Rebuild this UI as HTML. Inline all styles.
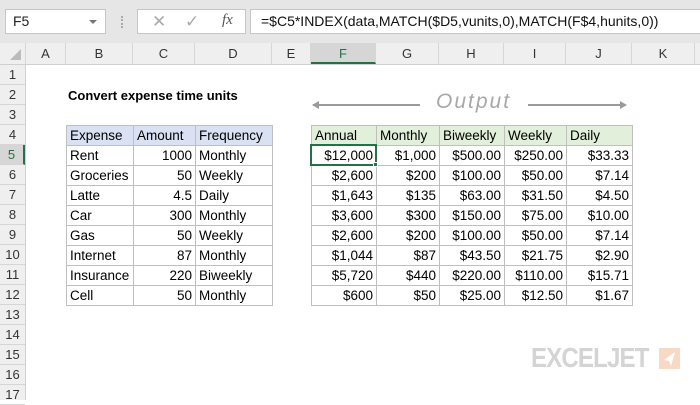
<!DOCTYPE html>
<html><head><meta charset="utf-8"><style>
*{margin:0;padding:0;box-sizing:border-box}
body{width:700px;height:400px;overflow:hidden;background:#fff;font-family:"Liberation Sans",Arial,sans-serif;position:relative}
.abs{position:absolute}
#tb{left:0;top:0;width:700px;height:43px;background:#e6e6e6}
.box{background:#fff;border:1px solid #c6c6c6;position:absolute}
#ch{left:0;top:43px;width:700px;height:22px;background:#efefef;border-bottom:1px solid #d0d0d0}
.c{position:absolute;top:0;height:21px;line-height:21px;text-align:center;font-size:13px;color:#333;border-right:1px solid #d6d6d6}
#rh{left:0;top:65px;width:26px;height:335px;background:#efefef;border-right:1px solid #d0d0d0}
.r{position:absolute;left:0;width:25px;height:20px;line-height:20px;text-align:center;font-size:13px;color:#333;border-bottom:1px solid #d6d6d6}
table{position:absolute;border-collapse:collapse;font-size:13.5px;color:#000}
td{border:1px solid #bfbfbf;height:20px;padding:0 3px;white-space:nowrap;line-height:18px}
td.n{text-align:right}
tr.h td{background:#d9e1f2}
tr.g td{background:#e2efda}
</style></head><body>
<div id="tb" class="abs">
  <div class="box" style="left:5px;top:9px;width:101px;height:25px;font-size:14px;line-height:23px;padding-left:7px;color:#222">F5<span style="position:absolute;right:8px;top:10px;width:0;height:0;border-left:4px solid transparent;border-right:4px solid transparent;border-top:4px solid #777"></span></div>
  <div class="abs" style="left:121px;top:16px;width:2px;height:12px;border-left:2px dotted #aaa"></div>
  <div class="box" style="left:137px;top:9px;width:109px;height:25px;color:#aaa">
    <span class="abs" style="left:14px;top:2px;font-size:17px">✕</span>
    <span class="abs" style="left:47px;top:2px;font-size:17px">✓</span>
    <span class="abs" style="left:84px;top:2px;font-size:15px;font-style:italic;font-family:'Liberation Serif',serif;color:#555">fx</span>
  </div>
  <div class="box" style="left:250px;top:9px;width:460px;height:25px;font-size:14px;line-height:23px;padding-left:10px;color:#111">=$C5*INDEX(data,MATCH($D5,vunits,0),MATCH(F$4,hunits,0))</div>
</div>
<div id="ch" class="abs">
  <div class="c" style="left:0;width:26px"><span class="abs" style="right:4px;bottom:4px;width:0;height:0;border-left:11px solid transparent;border-bottom:11px solid #bbb"></span></div>
  <div class="c" style="left:26px;width:40px">A</div>
  <div class="c" style="left:66px;width:67px">B</div>
  <div class="c" style="left:133px;width:62px">C</div>
  <div class="c" style="left:195px;width:77px">D</div>
  <div class="c" style="left:272px;width:39px">E</div>
  <div class="c" style="left:311px;width:65px;background:#d6d6d6;border-bottom:2px solid #217346;color:#217346">F</div>
  <div class="c" style="left:376px;width:63px">G</div>
  <div class="c" style="left:439px;width:65px">H</div>
  <div class="c" style="left:504px;width:62px">I</div>
  <div class="c" style="left:566px;width:66px">J</div>
  <div class="c" style="left:632px;width:63px">K</div>
</div>
<div id="rh" class="abs">
  <div class="r" style="top:0">1</div><div class="r" style="top:20px">2</div><div class="r" style="top:40px">3</div><div class="r" style="top:60px">4</div>
  <div class="r" style="top:80px;background:#d6d6d6;color:#217346;border-right:2px solid #217346">5</div>
  <div class="r" style="top:100px">6</div><div class="r" style="top:120px">7</div><div class="r" style="top:140px">8</div><div class="r" style="top:160px">9</div><div class="r" style="top:180px">10</div><div class="r" style="top:200px">11</div><div class="r" style="top:220px">12</div><div class="r" style="top:240px">13</div><div class="r" style="top:260px">14</div><div class="r" style="top:280px">15</div><div class="r" style="top:300px">16</div><div class="r" style="top:320px">17</div>
</div>
<div class="abs" style="left:68px;top:87px;font-size:13px;font-weight:bold;line-height:18px">Convert expense time units</div>
<table style="left:66px;top:125px">
<colgroup><col style="width:67px"><col style="width:62px"><col style="width:77px"></colgroup>
<tr class="h"><td>Expense</td><td>Amount</td><td>Frequency</td></tr>
<tr><td>Rent</td><td class="n">1000</td><td>Monthly</td></tr>
<tr><td>Groceries</td><td class="n">50</td><td>Weekly</td></tr>
<tr><td>Latte</td><td class="n">4.5</td><td>Daily</td></tr>
<tr><td>Car</td><td class="n">300</td><td>Monthly</td></tr>
<tr><td>Gas</td><td class="n">50</td><td>Weekly</td></tr>
<tr><td>Internet</td><td class="n">87</td><td>Monthly</td></tr>
<tr><td>Insurance</td><td class="n">220</td><td>Biweekly</td></tr>
<tr><td>Cell</td><td class="n">50</td><td>Monthly</td></tr>
</table>
<div class="abs" style="left:313px;top:104px;width:107px;height:2px;background:#9a9a9a"></div>
<div class="abs" style="left:312px;top:101px;width:0;height:0;border-top:4px solid transparent;border-bottom:4px solid transparent;border-right:7px solid #9a9a9a"></div>
<div class="abs" style="left:436px;top:90px;font-size:21px;font-style:italic;color:#a8a8a8;letter-spacing:2px">Output</div>
<div class="abs" style="left:528px;top:104px;width:92px;height:2px;background:#9a9a9a"></div>
<div class="abs" style="left:620px;top:101px;width:0;height:0;border-top:4px solid transparent;border-bottom:4px solid transparent;border-left:7px solid #9a9a9a"></div>
<table style="left:311px;top:125px">
<colgroup><col style="width:65px"><col style="width:63px"><col style="width:65px"><col style="width:62px"><col style="width:66px"></colgroup>
<tr class="g"><td>Annual</td><td>Monthly</td><td>Biweekly</td><td>Weekly</td><td>Daily</td></tr>
<tr><td class="n">$12,000</td><td class="n">$1,000</td><td class="n">$500.00</td><td class="n">$250.00</td><td class="n">$33.33</td></tr>
<tr><td class="n">$2,600</td><td class="n">$200</td><td class="n">$100.00</td><td class="n">$50.00</td><td class="n">$7.14</td></tr>
<tr><td class="n">$1,643</td><td class="n">$135</td><td class="n">$63.00</td><td class="n">$31.50</td><td class="n">$4.50</td></tr>
<tr><td class="n">$3,600</td><td class="n">$300</td><td class="n">$150.00</td><td class="n">$75.00</td><td class="n">$10.00</td></tr>
<tr><td class="n">$2,600</td><td class="n">$200</td><td class="n">$100.00</td><td class="n">$50.00</td><td class="n">$7.14</td></tr>
<tr><td class="n">$1,044</td><td class="n">$87</td><td class="n">$43.50</td><td class="n">$21.75</td><td class="n">$2.90</td></tr>
<tr><td class="n">$5,720</td><td class="n">$440</td><td class="n">$220.00</td><td class="n">$110.00</td><td class="n">$15.71</td></tr>
<tr><td class="n">$600</td><td class="n">$50</td><td class="n">$25.00</td><td class="n">$12.50</td><td class="n">$1.67</td></tr>
</table>
<div class="abs" style="left:310px;top:144px;width:67px;height:22px;border:2px solid #217346"></div>
<div class="abs" style="left:373px;top:162px;width:5px;height:5px;background:#217346;border:1px solid #fff"></div>
<div class="abs" style="left:531px;top:344px;font-size:28px;font-weight:bold;color:#d4d4d4;letter-spacing:-1px;line-height:28px;transform:scaleX(0.86);transform-origin:left top;white-space:nowrap">EXCELJET</div>
<div class="abs" style="left:659px;top:348px;width:21px;height:21px;background:#f7d9c4"><svg width="21" height="21"><path d="M16 4 L5 12 L10 13 L12 18 Z" fill="#fff"/></svg></div>
</body></html>
